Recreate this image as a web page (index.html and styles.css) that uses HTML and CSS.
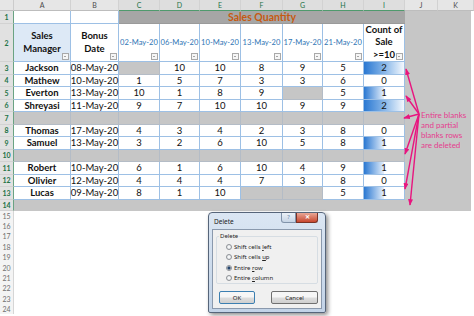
FILE: index.html
```html
<!doctype html>
<html lang="en">
    <head>
        <meta charset="UTF-8" />
        <meta name="viewport" content="width=device-width, initial-scale=1.0" />
        <title>Delete blank rows</title>
        <link rel="stylesheet" href="styles.css">
    </head>
    <body>
        <div class="sheet">
            <div class="corner"></div>
            <div class="col-head">A</div>
            <div class="col-head">B</div>
            <div class="col-head sel">C</div>
            <div class="col-head sel">D</div>
            <div class="col-head sel">E</div>
            <div class="col-head sel">F</div>
            <div class="col-head sel">G</div>
            <div class="col-head sel">H</div>
            <div class="col-head sel">I</div>
            <div class="col-head">J</div>
            <div class="col-head">K</div>

            <div class="side-fill"></div>

            <div class="row-head">1</div>
            <div class="cell"></div>
            <div class="cell"></div>
            <div class="title-cell">Sales Quantity</div>

            <div class="row-head">2</div>
            <div class="cell th th-blue"><span>Sales<br>Manager</span><i class="filter"></i></div>
            <div class="cell th"><span>Bonus<br>Date</span><i class="filter"></i></div>
            <div class="cell th th-date"><span>02-May-20</span><i class="filter"></i></div>
            <div class="cell th th-date"><span>06-May-20</span><i class="filter"></i></div>
            <div class="cell th th-date"><span>10-May-20</span><i class="filter"></i></div>
            <div class="cell th th-date"><span>13-May-20</span><i class="filter"></i></div>
            <div class="cell th th-date"><span>17-May-20</span><i class="filter"></i></div>
            <div class="cell th th-date"><span>21-May-20</span><i class="filter"></i></div>
            <div class="cell th th-count"><span>Count of<br>Sale<br>&gt;=10</span><i class="filter"></i></div>

            <div class="row-head">3</div>
            <div class="cell name">Jackson</div>
            <div class="cell">08-May-20</div>
            <div class="cell empty"></div>
            <div class="cell">10</div>
            <div class="cell">10</div>
            <div class="cell">8</div>
            <div class="cell">9</div>
            <div class="cell">5</div>
            <div class="cell bar-full">2</div>

            <div class="row-head">4</div>
            <div class="cell name">Mathew</div>
            <div class="cell">10-May-20</div>
            <div class="cell">1</div>
            <div class="cell">5</div>
            <div class="cell">7</div>
            <div class="cell">3</div>
            <div class="cell">3</div>
            <div class="cell">6</div>
            <div class="cell">0</div>

            <div class="row-head">5</div>
            <div class="cell name">Everton</div>
            <div class="cell">13-May-20</div>
            <div class="cell">10</div>
            <div class="cell">1</div>
            <div class="cell">8</div>
            <div class="cell">9</div>
            <div class="cell empty"></div>
            <div class="cell">5</div>
            <div class="cell bar-half">1</div>

            <div class="row-head">6</div>
            <div class="cell name">Shreyasi</div>
            <div class="cell">11-May-20</div>
            <div class="cell">9</div>
            <div class="cell">7</div>
            <div class="cell">10</div>
            <div class="cell">10</div>
            <div class="cell">9</div>
            <div class="cell">9</div>
            <div class="cell bar-full">2</div>

            <div class="row-head">7</div>
            <div class="cell empty"></div>
            <div class="cell empty"></div>
            <div class="cell empty"></div>
            <div class="cell empty"></div>
            <div class="cell empty"></div>
            <div class="cell empty"></div>
            <div class="cell empty"></div>
            <div class="cell empty"></div>
            <div class="cell empty"></div>

            <div class="row-head">8</div>
            <div class="cell name">Thomas</div>
            <div class="cell">17-May-20</div>
            <div class="cell">4</div>
            <div class="cell">3</div>
            <div class="cell">4</div>
            <div class="cell">2</div>
            <div class="cell">3</div>
            <div class="cell">8</div>
            <div class="cell">0</div>

            <div class="row-head">9</div>
            <div class="cell name">Samuel</div>
            <div class="cell">13-May-20</div>
            <div class="cell">3</div>
            <div class="cell">2</div>
            <div class="cell">6</div>
            <div class="cell">10</div>
            <div class="cell">5</div>
            <div class="cell">8</div>
            <div class="cell bar-half">1</div>

            <div class="row-head">10</div>
            <div class="cell empty"></div>
            <div class="cell empty"></div>
            <div class="cell empty"></div>
            <div class="cell empty"></div>
            <div class="cell empty"></div>
            <div class="cell empty"></div>
            <div class="cell empty"></div>
            <div class="cell empty"></div>
            <div class="cell empty"></div>

            <div class="row-head">11</div>
            <div class="cell name">Robert</div>
            <div class="cell">10-May-20</div>
            <div class="cell">6</div>
            <div class="cell">1</div>
            <div class="cell">6</div>
            <div class="cell">10</div>
            <div class="cell">4</div>
            <div class="cell">9</div>
            <div class="cell bar-half">1</div>

            <div class="row-head">12</div>
            <div class="cell name">Olivier</div>
            <div class="cell">12-May-20</div>
            <div class="cell">4</div>
            <div class="cell">4</div>
            <div class="cell">4</div>
            <div class="cell">7</div>
            <div class="cell">3</div>
            <div class="cell">8</div>
            <div class="cell">0</div>

            <div class="row-head">13</div>
            <div class="cell name">Lucas</div>
            <div class="cell">09-May-20</div>
            <div class="cell">8</div>
            <div class="cell">1</div>
            <div class="cell">10</div>
            <div class="cell empty"></div>
            <div class="cell empty"></div>
            <div class="cell">5</div>
            <div class="cell bar-half">1</div>

            <div class="row-head">14</div>
            <div class="band"></div>

            <div class="row-head free">15</div>
            <div class="row-head free">16</div>
            <div class="row-head free">17</div>
            <div class="row-head free">18</div>
            <div class="row-head free">19</div>
            <div class="row-head free">20</div>
            <div class="row-head free">21</div>
            <div class="row-head free">22</div>
            <div class="row-head free">23</div>
            <div class="row-head free">24</div>
        </div>

        <svg class="arrows" viewBox="0 0 474 316" width="474" height="316">
            <defs>
                <marker id="head" viewBox="0 0 8 6" refX="7" refY="3" markerWidth="7" markerHeight="5" markerUnits="userSpaceOnUse" orient="auto">
                    <path d="M0,0 L8,3 L0,6 Z" fill="#e8157f" />
                </marker>
            </defs>
            <g stroke="#e8157f" stroke-width="1.4" fill="none" marker-end="url(#head)">
                <line x1="419" y1="114" x2="406" y2="69" />
                <line x1="419" y1="114" x2="406" y2="96" />
                <line x1="419" y1="114" x2="404" y2="118" />
                <line x1="419" y1="114" x2="405" y2="154" />
                <line x1="419" y1="114" x2="405" y2="189" />
                <line x1="419" y1="114" x2="410" y2="205" />
            </g>
        </svg>
        <div class="note">Entire blanks<br>and partial<br>blanks rows<br>are deleted</div>

        <div class="dialog">
            <div class="dlg-title">
                <span class="dlg-name">Delete</span>
                <div class="dlg-ctrls">
                    <span class="help">?</span>
                    <span class="close">&#x2715;</span>
                </div>
            </div>
            <div class="dlg-body">
                <fieldset class="group">
                    <legend>Delete</legend>
                    <label class="radio"><span class="dot"></span><span>Shift cells <u>l</u>eft</span></label>
                    <label class="radio"><span class="dot"></span><span>Shift cells <u>u</u>p</span></label>
                    <label class="radio"><span class="dot on"></span><span>Entire <u>r</u>ow</span></label>
                    <label class="radio"><span class="dot"></span><span>Entire <u>c</u>olumn</span></label>
                </fieldset>
                <div class="dlg-buttons">
                    <button class="btn ok">OK</button>
                    <button class="btn cancel">Cancel</button>
                </div>
            </div>
        </div>
    </body>
</html>
```

FILE: styles.css
```css
body {
    margin: 0;
    width: 474px;
    height: 316px;
    overflow: hidden;
    position: relative;
    background: #ffffff;
    font-family: "Lato", "Liberation Sans", sans-serif;
    color: #111;
}
.sheet {
    display: grid;
    grid-template-columns: 14px 57px 48px 41px 40px 41px 42px 40px 41px 41px 33px 36px;
    grid-template-rows: 11px 13px 38px repeat(11, 12.5px) 11px repeat(10, 10.4px);
}
.sheet > div {
    box-sizing: border-box;
}
.corner {
    background: #e6e6e6;
    border-right: 1px solid #cccccc;
    border-bottom: 1px solid #bdbdbd;
}
.col-head {
    background: #e6e6e6;
    border-right: 1px solid #d2d2d2;
    border-bottom: 1px solid #bdbdbd;
    font-size: 7px;
    color: #4a4a4a;
    display: flex;
    align-items: center;
    justify-content: center;
}
.col-head.sel {
    color: #217346;
    background: #dedede;
    border-bottom-color: #4f9a6d;
}
.row-head {
    grid-column: 1;
    background: #e1e1e1;
    border-right: 1px solid #6aa383;
    border-bottom: 1px solid #d2d2d2;
    font-size: 7px;
    font-weight: 700;
    color: #217346;
    display: flex;
    align-items: center;
    justify-content: center;
}
.row-head.free {
    background: #f4f4f4;
    color: #707070;
    font-weight: 400;
    border-right-color: #d6d6d6;
    border-bottom: none;
}
.cell {
    background: #ffffff;
    border-right: 1px solid #9dc0e5;
    border-bottom: 1px solid #9dc0e5;
    font-size: 9.5px;
    display: flex;
    align-items: center;
    justify-content: center;
    white-space: nowrap;
}
.cell.name {
    font-weight: 700;
}
.cell.empty {
    background: #c6c6c6;
    border-color: #b4bcc6;
}
.title-cell {
    grid-column: span 7;
    background: #a6a6a6;
    border-bottom: 1px solid #9a9a9a;
    color: #c55a11;
    font-size: 10.5px;
    font-weight: 700;
    display: flex;
    align-items: center;
    justify-content: center;
}
.side-fill {
    grid-column: 11 / 13;
    grid-row: 2 / 16;
    background: #c6c6c6;
    border-right: 3px solid #ffffff;
}
.band {
    grid-column: span 9;
    background: #c6c6c6;
}
.th {
    position: relative;
    font-weight: 700;
    text-align: center;
    line-height: 12.5px;
}
.th-blue {
    background: #dde9f6;
}
.th-date {
    font-weight: 400;
    font-size: 7.6px;
    color: #2f75b5;
}
.filter {
    position: absolute;
    right: 1px;
    bottom: 1px;
    width: 7px;
    height: 7px;
    box-sizing: border-box;
    border: 1px solid #a9a9a9;
    background: #f6f6f6;
}
.filter::after {
    content: "";
    position: absolute;
    left: 1px;
    top: 2px;
    border-left: 1.5px solid transparent;
    border-right: 1.5px solid transparent;
    border-top: 1.5px solid #555555;
}
.bar-full {
    background: linear-gradient(to right, #2a78d2, #8fbbea 55%, #f4f8fd);
}
.bar-half {
    background: linear-gradient(to right, #2a78d2, #e6f0fb) 0 0 / 50% 100% no-repeat, #ffffff;
}
.arrows {
    position: absolute;
    left: 0;
    top: 0;
    pointer-events: none;
}
.note {
    position: absolute;
    left: 421px;
    top: 110px;
    font-size: 8px;
    line-height: 10px;
    color: #e53d8f;
}
.dialog {
    position: absolute;
    left: 208px;
    top: 212px;
    width: 118px;
    height: 101px;
    box-sizing: border-box;
    background: linear-gradient(#dbe6f3, #c2d3e7);
    border: 1px solid #56657a;
    border-radius: 4px 4px 2px 2px;
    box-shadow: 2px 2px 4px rgba(0, 0, 0, 0.45);
    padding: 0 3px 3px;
    display: flex;
    flex-direction: column;
    font-family: "Noto Sans", "Liberation Sans", sans-serif;
    color: #222;
}
.dlg-title {
    height: 16px;
    display: flex;
    justify-content: space-between;
    align-items: flex-start;
}
.dlg-name {
    font-size: 6.5px;
    margin: 4px 0 0 2px;
}
.dlg-ctrls {
    display: flex;
    margin-right: 4px;
}
.help {
    width: 15px;
    height: 10px;
    box-sizing: border-box;
    border: 1px solid #8193aa;
    border-top: none;
    border-radius: 0 0 0 3px;
    background: linear-gradient(#edf2f8, #c6d4e5);
    color: #6d86a8;
    font-size: 6px;
    line-height: 9px;
    text-align: center;
}
.close {
    width: 22px;
    height: 10px;
    box-sizing: border-box;
    border: 1px solid #7b3326;
    border-top: none;
    border-radius: 0 0 3px 0;
    background: linear-gradient(#e9a796, #c8472f);
    color: #ffffff;
    font-size: 6px;
    font-weight: 700;
    line-height: 9px;
    text-align: center;
}
.dlg-body {
    flex: 1;
    background: #f0f0f0;
    border: 1px solid #8a99ad;
    padding: 2px 3px 4px;
    display: flex;
    flex-direction: column;
}
.group {
    margin: 0;
    padding: 2px 0 0 9px;
    border: 1px solid #d6dde3;
    border-radius: 2px;
    display: flex;
    flex-direction: column;
    gap: 1px;
}
.group legend {
    font-size: 6px;
    padding: 0 1px;
    margin-left: -7px;
}
.radio {
    font-size: 6px;
    height: 9.5px;
    display: flex;
    align-items: center;
}
.dot {
    width: 6px;
    height: 6px;
    box-sizing: border-box;
    border-radius: 50%;
    border: 1px solid #8e9297;
    background: radial-gradient(#ffffff, #d9dde2);
    margin-right: 2px;
}
.dot.on {
    background: radial-gradient(circle, #24446d 0 1.4px, #e6e9ed 1.8px);
}
.dlg-buttons {
    margin-top: auto;
    display: flex;
    justify-content: space-between;
    padding-left: 3px;
}
.btn {
    height: 13px;
    padding: 0;
    font-family: inherit;
    font-size: 6px;
    color: #222;
    border: 1px solid #707070;
    border-radius: 2px;
    background: linear-gradient(#f6f6f6 45%, #dddddd 55%, #cfcfcf);
}
.btn.ok {
    width: 36px;
    border-color: #3c7fb1;
}
.btn.cancel {
    width: 47px;
}
```
